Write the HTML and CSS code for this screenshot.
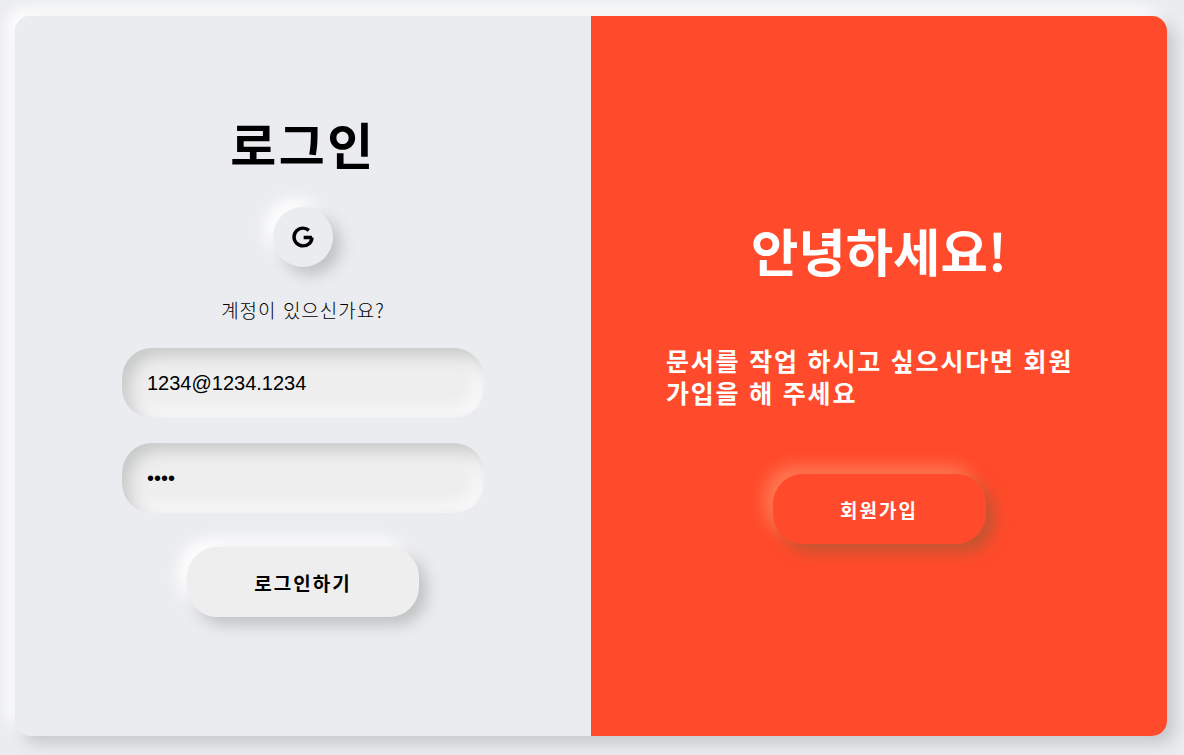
FILE: index.html
```html
<!DOCTYPE html>
<html lang="ko">
<head>
<meta charset="utf-8">
<title>로그인</title>
<link rel="stylesheet" href="styles.css">
</head>
<body>
<main class="card">
  <section class="login">
    <h1 class="login-title">로그인</h1>
    <a class="social" href="#" aria-label="Google">
      <svg class="social-icon" viewBox="0 0 24 24" width="26" height="26" aria-hidden="true">
        <path d="M20.2 12.4H12.6M20.2 12.4C20.2 17 16.8 20.2 12 20.2C7.4 20.2 3.7 16.5 3.7 12C3.7 7.5 7.4 3.8 12 3.8C14.2 3.8 16 4.6 17.4 5.9" fill="none" stroke="#000" stroke-width="3.2"/>
      </svg>
    </a>
    <p class="login-hint">계정이 있으신가요?</p>
    <input class="field" type="email" value="1234@1234.1234">
    <input class="field" type="password" value="1234">
    <button class="btn btn-light" type="button">로그인하기</button>
  </section>
  <section class="signup">
    <h2 class="signup-title">안녕하세요!</h2>
    <p class="signup-text">문서를 작업 하시고 싶으시다면 회원 가입을 해 주세요</p>
    <button class="btn btn-red" type="button">회원가입</button>
  </section>
</main>
</body>
</html>
```
FILE: styles.css
```css
* { box-sizing: border-box; }
html, body { height: 100%; }
body {
  margin: 0;
  padding: 16px 0 0 15px;
  background: #ebecf0;
  overflow: hidden;
  font-family: "Noto Sans CJK KR", "Noto Sans", "Liberation Sans", sans-serif;
}
.card {
  display: flex;
  width: 1152px;
  height: 720px;
  border-radius: 15px;
  box-shadow: 8px 8px 15px #c6cacb, -8px -8px 15px #fff;
}
.login, .signup {
  flex: 0 0 576px;
  display: flex;
  flex-direction: column;
  align-items: center;
}
.login {
  background: #ebecf0;
  border-radius: 15px 0 0 15px;
  padding-top: 92px;
}
.signup {
  background: #ff4b2b;
  border-radius: 0 15px 15px 0;
  color: #fff;
  padding-top: 196px;
}
.login-title {
  margin: 0;
  font-size: 50px;
  line-height: 70px;
  font-weight: 700;
  letter-spacing: 2.5px;
  color: #000;
}
.social {
  display: flex;
  align-items: center;
  justify-content: center;
  width: 60px;
  height: 60px;
  margin-top: 29px;
  border-radius: 50%;
  background: #ebecf0;
  box-shadow: 8px 8px 15px #bfc3c3, -8px -8px 15px #fff;
}
.login-hint {
  margin: 30px 0 25px;
  font-size: 19px;
  line-height: 26px;
  font-weight: 300;
  letter-spacing: 1px;
  color: #000;
}
.field {
  display: block;
  width: 362px;
  height: 70px;
  margin: 0 0 25px;
  padding: 0 25px;
  border: 0;
  outline: 0;
  border-radius: 30px;
  background: #eee;
  box-shadow: inset 8px 8px 15px #c8cac9, inset -8px -8px 15px #f9f9f9;
  font-family: "Liberation Sans", Arial, sans-serif;
  font-size: 20px;
  color: #000;
}
.btn {
  height: 70px;
  border: 0;
  border-radius: 30px;
  font-family: inherit;
  font-size: 19px;
  font-weight: 700;
  letter-spacing: 2px;
}
.btn-light {
  width: 232px;
  margin-top: 9px;
  background: #eee;
  color: #000;
  box-shadow: 8px 8px 15px #bfc3c3, -8px -8px 15px #fff;
}
.signup-title {
  margin: 0;
  font-size: 51.5px;
  line-height: 76px;
  font-weight: 700;
}
.signup-text {
  width: 426px;
  margin: 56px 0 0;
  font-size: 25px;
  line-height: 32px;
  font-weight: 700;
  letter-spacing: 1.8px;
  word-break: keep-all;
}
.btn-red {
  width: 213px;
  margin-top: 66px;
  background: #ff4b2b;
  color: #fff;
  box-shadow: 8px 8px 15px #c25532, -8px -8px 15px #ff7a54;
}
```
